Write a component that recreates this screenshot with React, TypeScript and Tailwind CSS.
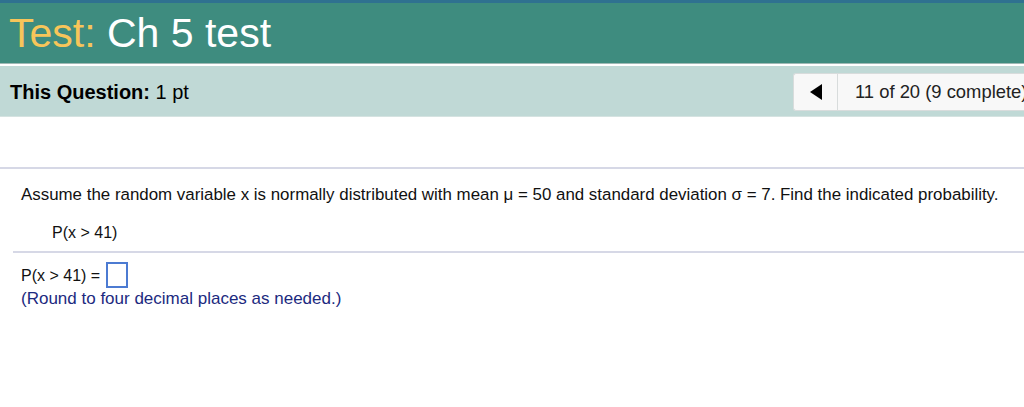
// Pantalla de pregunta de examen (Ch 5 test)
const font = { fontFamily: '"Liberation Sans", Arial, sans-serif' }

function NavBox() {
  // Botón "anterior" + contador de preguntas, recortado por el borde derecho
  return (
    <div className="flex h-[38px] shrink-0 items-stretch rounded-l-[3px] border border-r-0 border-[#d8dcdc] bg-[#f8f8f8]">
      <div className="flex w-[44px] items-center justify-center border-r border-[#d8dcdc]">
        <svg width="12" height="16" viewBox="0 0 12 16">
          <polygon points="12,0 12,16 0,8" fill="#000" />
        </svg>
      </div>
      <div className="flex items-center whitespace-nowrap pl-[17px] pr-2 text-[18.4px] text-[#222]">
        11 of 20 (9 complete)
      </div>
    </div>
  )
}

export default function App() {
  return (
    <div className="h-[407px] w-[1024px] overflow-hidden bg-white text-black" style={font}>
      {/* Cabecera verde con título */}
      <header className="flex h-[63px] items-center border-t-[3px] border-[#2f7190] bg-[#3e8c7f] pl-[9px]">
        <h1 className="text-[41px] leading-none font-normal">
          <span className="text-[#f7c55a]">Test:</span>
          <span className="text-white"> Ch 5 test</span>
        </h1>
      </header>

      {/* Barra de pregunta */}
      <div className="border-t border-[#9fb9b5]">
        <div className="h-[2px] bg-white" />
        <div className="flex h-[51px] items-center overflow-hidden border-b border-[#d5e3e1] bg-[#c0d9d6] pl-[10px]">
          <div className="w-[783px] shrink-0 pt-[2px] text-[20px]">
            <span className="font-bold">This Question:</span> 1 pt
          </div>
          <div className="pt-[2px]">
            <NavBox />
          </div>
        </div>
      </div>

      {/* Contenido de la pregunta */}
      <div className="h-[52px] border-b-2 border-[#d6d8e6]" />
      <div className="whitespace-nowrap px-[21px] pt-[16px] text-[16.9px] leading-[19px] text-[#111]">
        Assume the random variable x is normally distributed with mean μ = 50 and standard deviation σ = 7. Find the indicated probability.
      </div>
      <div className="pl-[52px] pt-[19px] text-[16px] leading-[19px] text-[#111]">P(x &gt; 41)</div>
      <div className="ml-[13px] mt-[9px] border-t-2 border-[#d6d8e6]" />

      <div className="px-[21px] pt-[9px]">
        <div className="flex items-center text-[16px] leading-[19px] text-[#111]">
          <span>P(x &gt; 41) =</span>
          <span className="ml-[6px] inline-block h-[26px] w-[22px] border-2 border-[#4c7bd2] bg-white" />
        </div>
        <div className="pt-[1px] text-[17px] leading-[19px] text-[#1c2a80]">
          (Round to four decimal places as needed.)
        </div>
      </div>
    </div>
  )
}
